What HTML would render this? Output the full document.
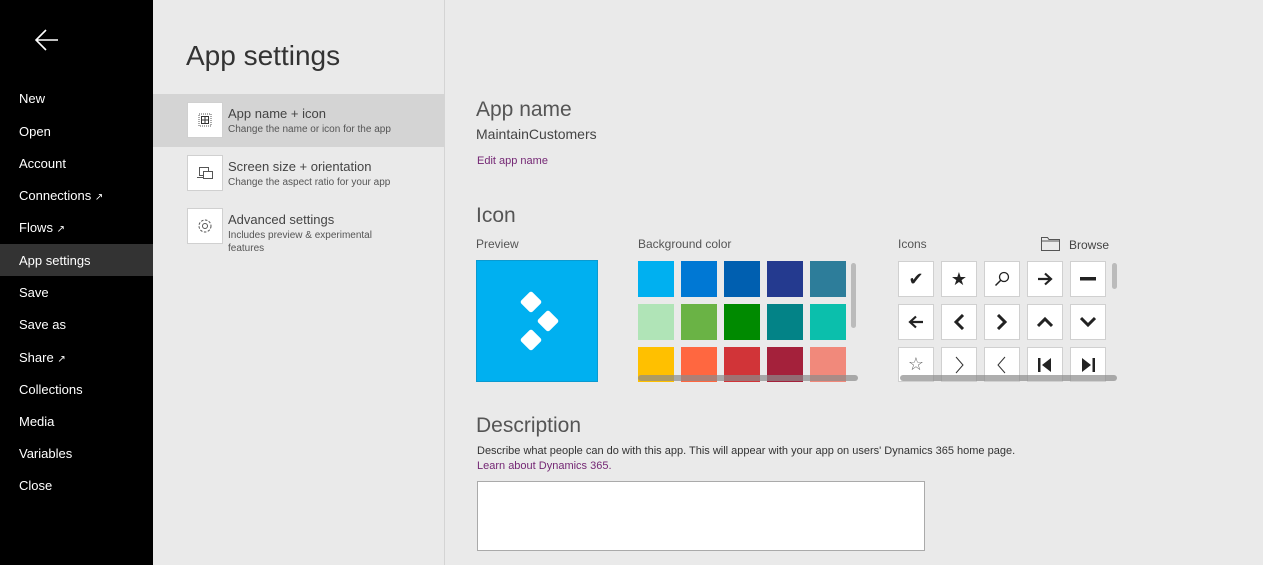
<!DOCTYPE html>
<html><head><style>
*{margin:0;padding:0;box-sizing:border-box}
body{width:1263px;height:565px;overflow:hidden;background:#eaeaea;font-family:"Liberation Sans",sans-serif;position:relative;color:#333}
.side{position:absolute;left:0;top:0;width:153px;height:565px;background:#000;color:#fff}
.side .it{position:absolute;left:0;width:153px;height:32px;line-height:33px;padding-left:19px;font-size:13px}
.sel{background:#333}
.abs{position:absolute}
.mid{position:absolute;left:153px;top:0;width:292px;height:565px;border-right:1px solid #d4d4d4}
.opt{position:absolute;left:0;width:291px;height:53px}
.opt .ic{position:absolute;left:34px;top:8px;width:36px;height:36px;background:#fff;border:1px solid #d0d0d0;display:flex;align-items:center;justify-content:center}
.opt .t{position:absolute;left:75px;top:12px;font-size:13px;color:#444}
.opt .s{position:absolute;left:75px;top:29px;font-size:10px;color:#555;line-height:13px;width:180px}
.sw{position:absolute;width:36px;height:36px}
.ib{position:absolute;width:36px;height:36px;background:#fff;border:1px solid #d0d0d0;display:flex;align-items:center;justify-content:center;font-size:18px;color:#222}
</style></head><body>
<div class="side">
<svg class="abs" style="left:35px;top:29px" width="24" height="22" viewBox="0 0 24 22"><path d="M1 11H23M11 1L1 11L11 21" stroke="#fff" stroke-width="1.6" fill="none"/></svg>
<div class="it" style="top:82px">New</div>
<div class="it" style="top:115px">Open</div>
<div class="it" style="top:147px">Account</div>
<div class="it" style="top:179px">Connections <span style="font-size:10px">&#x2197;</span></div>
<div class="it" style="top:211px">Flows <span style="font-size:10px">&#x2197;</span></div>
<div class="it sel" style="top:244px">App settings</div>
<div class="it" style="top:276px">Save</div>
<div class="it" style="top:308px">Save as</div>
<div class="it" style="top:341px">Share <span style="font-size:10px">&#x2197;</span></div>
<div class="it" style="top:373px">Collections</div>
<div class="it" style="top:405px">Media</div>
<div class="it" style="top:437px">Variables</div>
<div class="it" style="top:469px">Close</div>
</div>
<div class="abs" style="left:186px;top:40px;font-size:28px;color:#333">App settings</div>
<div class="mid">
<div class="opt" style="top:94px;background:#d4d4d4"><div class="ic"><svg width="14" height="14"><rect x="1" y="1" width="12" height="12" fill="none" stroke="#555" stroke-dasharray="1 1"/><rect x="3.5" y="3.5" width="7" height="7" fill="none" stroke="#333"/><path d="M7 3.5V10.5M3.5 7H10.5" stroke="#333"/></svg></div><div class="t">App name + icon</div><div class="s">Change the name or icon for the app</div></div>
<div class="opt" style="top:147px"><div class="ic"><svg width="16" height="12"><rect x="2.5" y="0.5" width="9" height="8" fill="none" stroke="#555"/><rect x="6.5" y="4.5" width="9" height="7" fill="#fff" stroke="#555"/><path d="M0 10.5H6" stroke="#555"/></svg></div><div class="t">Screen size + orientation</div><div class="s">Change the aspect ratio for your app</div></div>
<div class="opt" style="top:200px"><div class="ic"><svg width="18" height="18" viewBox="0 0 18 18"><circle cx="9" cy="9" r="2.5" fill="none" stroke="#555"/><circle cx="9" cy="9" r="6" fill="none" stroke="#555" stroke-dasharray="2.5 1.5"/></svg></div><div class="t">Advanced settings</div><div class="s">Includes preview &amp; experimental features</div></div>
</div>
<div class="abs" style="left:476px;top:98px;font-size:21px;color:#555">App name</div>
<div class="abs" style="left:476px;top:126px;font-size:14px;color:#444">MaintainCustomers</div>
<div class="abs" style="left:477px;top:155px;font-size:11px;color:#742774">Edit app name</div>
<div class="abs" style="left:476px;top:204px;font-size:21px;color:#555">Icon</div>
<div class="abs" style="left:476px;top:237px;font-size:12px;color:#555">Preview</div>
<div class="abs" style="left:638px;top:237px;font-size:12px;color:#555">Background color</div>
<div class="abs" style="left:898px;top:237px;font-size:12px;color:#555">Icons</div>
<svg class="abs" style="left:1041px;top:236px" width="19" height="15"><path d="M0.5 1.5H6.5L8 3.5H18.5V14.5H0.5Z" fill="none" stroke="#555"/><path d="M0.5 5H18.5" stroke="#555"/></svg>
<div class="abs" style="left:1069px;top:238px;font-size:12px;color:#444">Browse</div>
<div class="abs" style="left:476px;top:260px;width:122px;height:122px;background:#00b0f0;border:1px solid #0a9ad0">
<svg class="abs" style="left:0;top:0" width="120" height="120" viewBox="0 0 120 120"><g fill="#fff"><rect x="46" y="33" width="16" height="16" rx="2.5" transform="rotate(45 54 41)"/><rect x="63" y="52" width="16" height="16" rx="2.5" transform="rotate(45 71 60)"/><rect x="46" y="71" width="16" height="16" rx="2.5" transform="rotate(45 54 79)"/></g></svg></div>
<div class="sw" style="left:638px;top:261px;background:#00b0f0"></div>
<div class="sw" style="left:681px;top:261px;background:#0078d4"></div>
<div class="sw" style="left:724px;top:261px;background:#005fb0"></div>
<div class="sw" style="left:767px;top:261px;background:#243a8f"></div>
<div class="sw" style="left:810px;top:261px;background:#2d7d9a"></div>
<div class="sw" style="left:638px;top:304px;background:#b0e4b7"></div>
<div class="sw" style="left:681px;top:304px;background:#6ab345"></div>
<div class="sw" style="left:724px;top:304px;background:#008a00"></div>
<div class="sw" style="left:767px;top:304px;background:#038387"></div>
<div class="sw" style="left:810px;top:304px;background:#0bbfac"></div>
<div class="sw" style="left:638px;top:347px;background:#ffc000;height:35px"></div>
<div class="sw" style="left:681px;top:347px;background:#ff6740;height:35px"></div>
<div class="sw" style="left:724px;top:347px;background:#d13438;height:35px"></div>
<div class="sw" style="left:767px;top:347px;background:#a4213b;height:35px"></div>
<div class="sw" style="left:810px;top:347px;background:#f1897b;height:35px"></div>
<div class="abs" style="left:638px;top:375px;width:220px;height:6px;border-radius:3px;background:rgba(140,140,140,.7)"></div>
<div class="abs" style="left:851px;top:263px;width:5px;height:65px;border-radius:3px;background:#bbb"></div>
<div class="ib" style="left:898px;top:261px">&#x2714;</div>
<div class="ib" style="left:941px;top:261px">&#x2605;</div>
<div class="ib" style="left:984px;top:261px"><svg width="16" height="16"><circle cx="10" cy="6" r="4.5" fill="none" stroke="#222" stroke-width="1.3"/><path d="M7 9L1.5 14.5" stroke="#222" stroke-width="1.5"/></svg></div>
<div class="ib" style="left:1027px;top:261px"><svg width="16" height="14"><path d="M1 7H14M8 1.5L14 7L8 12.5" stroke="#222" stroke-width="2.2" fill="none"/></svg></div>
<div class="ib" style="left:1070px;top:261px"><svg width="16" height="4"><rect width="16" height="3.5" fill="#222"/></svg></div>
<div class="ib" style="left:898px;top:304px"><svg width="16" height="14"><path d="M15 7H2M8 1.5L2 7L8 12.5" stroke="#222" stroke-width="2.2" fill="none"/></svg></div>
<div class="ib" style="left:941px;top:304px"><svg width="12" height="16"><path d="M10 1L3 8L10 15" stroke="#222" stroke-width="3" fill="none"/></svg></div>
<div class="ib" style="left:984px;top:304px"><svg width="12" height="16"><path d="M2 1L9 8L2 15" stroke="#222" stroke-width="3" fill="none"/></svg></div>
<div class="ib" style="left:1027px;top:304px"><svg width="16" height="12"><path d="M1 10L8 3L15 10" stroke="#222" stroke-width="3" fill="none"/></svg></div>
<div class="ib" style="left:1070px;top:304px"><svg width="16" height="12"><path d="M1 2L8 9L15 2" stroke="#222" stroke-width="3" fill="none"/></svg></div>
<div class="ib" style="left:898px;top:347px;height:35px;color:#666">&#x2606;</div>
<div class="ib" style="left:941px;top:347px;height:35px"><svg width="10" height="18"><path d="M2 1L9 9L2 17" stroke="#333" stroke-width="1" fill="none"/></svg></div>
<div class="ib" style="left:984px;top:347px;height:35px"><svg width="10" height="18"><path d="M8 1L1 9L8 17" stroke="#333" stroke-width="1" fill="none"/></svg></div>
<div class="ib" style="left:1027px;top:347px;height:35px"><svg width="14" height="14"><rect x="0" y="0" width="2.5" height="14" fill="#222"/><path d="M13 0V14L4 7Z" fill="#222"/></svg></div>
<div class="ib" style="left:1070px;top:347px;height:35px"><svg width="14" height="14"><rect x="11.5" y="0" width="2.5" height="14" fill="#222"/><path d="M1 0V14L10 7Z" fill="#222"/></svg></div>
<div class="abs" style="left:900px;top:375px;width:217px;height:6px;border-radius:3px;background:rgba(140,140,140,.7)"></div>
<div class="abs" style="left:1112px;top:263px;width:5px;height:26px;border-radius:3px;background:#bbb"></div>
<div class="abs" style="left:476px;top:414px;font-size:21px;color:#555">Description</div>
<div class="abs" style="left:477px;top:445px;font-size:11px;color:#333">Describe what people can do with this app. This will appear with your app on users' Dynamics 365 home page.</div>
<div class="abs" style="left:477px;top:460px;font-size:11px;color:#742774">Learn about Dynamics 365.</div>
<div class="abs" style="left:477px;top:481px;width:448px;height:70px;background:#fff;border:1px solid #aaa"></div>
</body></html>
